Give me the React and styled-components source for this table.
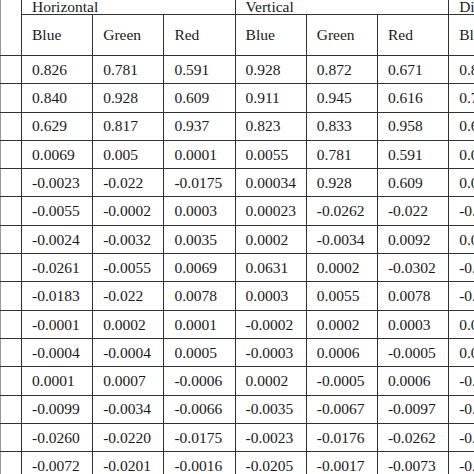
import styled, { createGlobalStyle } from "styled-components";

const GlobalStyle = createGlobalStyle`
  html, body {
    margin: 0;
    padding: 0;
    background: #ffffff;
    overflow: hidden;
  }
`;

const groups = ["Horizontal", "Vertical", "Diagonal"];
const channels = ["Blue", "Green", "Red"];

const rows = [
  ["0.826", "0.781", "0.591", "0.928", "0.872", "0.671", "0.853"],
  ["0.840", "0.928", "0.609", "0.911", "0.945", "0.616", "0.764"],
  ["0.629", "0.817", "0.937", "0.823", "0.833", "0.958", "0.652"],
  ["0.0069", "0.005", "0.0001", "0.0055", "0.781", "0.591", "0.0041"],
  ["-0.0023", "-0.022", "-0.0175", "0.00034", "0.928", "0.609", "0.0012"],
  ["-0.0055", "-0.0002", "0.0003", "0.00023", "-0.0262", "-0.022", "-0.0143"],
  ["-0.0024", "-0.0032", "0.0035", "0.0002", "-0.0034", "0.0092", "0.0027"],
  ["-0.0261", "-0.0055", "0.0069", "0.0631", "0.0002", "-0.0302", "-0.0118"],
  ["-0.0183", "-0.022", "0.0078", "0.0003", "0.0055", "0.0078", "-0.0095"],
  ["-0.0001", "0.0002", "0.0001", "-0.0002", "0.0002", "0.0003", "0.0004"],
  ["-0.0004", "-0.0004", "0.0005", "-0.0003", "0.0006", "-0.0005", "0.0002"],
  ["0.0001", "0.0007", "-0.0006", "0.0002", "-0.0005", "0.0006", "-0.0003"],
  ["-0.0099", "-0.0034", "-0.0066", "-0.0035", "-0.0067", "-0.0097", "-0.0081"],
  ["-0.0260", "-0.0220", "-0.0175", "-0.0023", "-0.0176", "-0.0262", "-0.0197"],
  ["-0.0072", "-0.0201", "-0.0016", "-0.0205", "-0.0017", "-0.0073", "-0.0064"],
];

const Frame = styled.div`
  width: 474px;
  height: 474px;
  overflow: hidden;
  background: #ffffff;
`;

const Table = styled.table`
  margin-top: -14px;
  width: 519px;
  table-layout: fixed;
  border-collapse: collapse;
  font-family: "Liberation Serif", "Times New Roman", serif;
  font-size: 15.5px;
  color: #1a1a1a;
`;

const GroupRow = styled.tr`
  height: 28px;
`;

const SubRow = styled.tr`
  height: 41px;
`;

const DataRow = styled.tr`
  height: 28.3px;
`;

const Cell = styled.td`
  border: 1px solid #333333;
  padding: 0 0 0 10px;
  text-align: left;
  vertical-align: ${(p) => (p.$bottom ? "bottom" : "middle")};
  white-space: nowrap;
  overflow: hidden;
  line-height: 1;
`;

const LabelCell = styled.td`
  border: 1px solid #333333;
  border-left-color: #9a9a9a;
  padding: 0;
`;

export default function App() {
  return (
    <Frame>
      <GlobalStyle />
      <Table>
        <colgroup>
          <col style={{ width: 21 }} />
          {Array.from({ length: 7 }).map((_, i) => (
            <col key={i} style={{ width: 71.2 }} />
          ))}
        </colgroup>
        <thead>
          <GroupRow>
            <LabelCell rowSpan={2} />
            {groups.map((g) => (
              <Cell key={g} colSpan={3} $bottom>
                {g}
              </Cell>
            ))}
          </GroupRow>
          <SubRow>
            {groups.map((g) =>
              channels.map((c) => <Cell key={g + c}>{c}</Cell>)
            )}
          </SubRow>
        </thead>
        <tbody>
          {rows.map((r, i) => (
            <DataRow key={i}>
              <LabelCell />
              {r.map((v, j) => (
                <Cell key={j}>{v}</Cell>
              ))}
            </DataRow>
          ))}
        </tbody>
      </Table>
    </Frame>
  );
}
